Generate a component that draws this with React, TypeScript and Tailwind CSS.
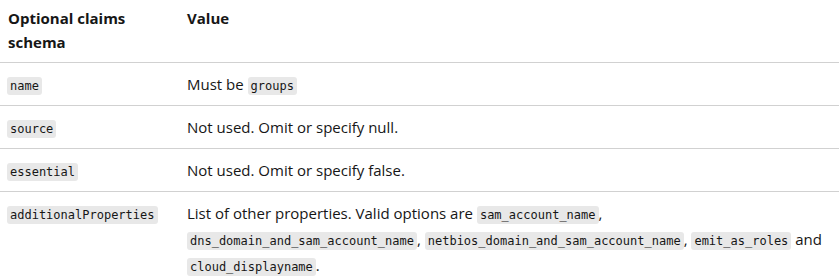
import React from 'react';

const C: React.FC<{ children: React.ReactNode }> = ({ children }) => (
  <code className="rounded-[3px] bg-[#e8e8e8] px-[3px] py-[2px] font-['DejaVu_Sans_Mono',monospace] text-[12px] leading-[14px] text-[#161616]">
    {children}
  </code>
);

const rows: { key: string; value: React.ReactNode }[] = [
  { key: 'name', value: <>Must be <C>groups</C></> },
  { key: 'source', value: 'Not used. Omit or specify null.' },
  { key: 'essential', value: 'Not used. Omit or specify false.' },
  {
    key: 'additionalProperties',
    value: (
      <>
        List of other properties. Valid options are <C>sam_account_name</C>,{' '}
        <C>dns_domain_and_sam_account_name</C>, <C>netbios_domain_and_sam_account_name</C>,{' '}
        <C>emit_as_roles</C> and <C>cloud_displayname</C>.
      </>
    ),
  },
];

export default function App() {
  return (
    <div className="h-[280px] w-[839px] overflow-hidden bg-white font-['Open_Sans',sans-serif] text-[15px] text-[#161616]">
      <table className="w-full border-collapse text-left">
        <thead>
          <tr className="border-b border-[#d1d1d1]">
            <th className="w-[179px] px-2 pt-[6px] pb-[8px] align-top font-bold leading-6">
              Optional claims
              <br />
              schema
            </th>
            <th className="px-2 pt-[6px] pb-[8px] align-top font-bold leading-6">Value</th>
          </tr>
        </thead>
        <tbody>
          {rows.map((r) => (
            <tr key={r.key} className="border-b border-[#d1d1d1]">
              <td className="h-[42px] px-[7px] py-[8px] align-top leading-[26px]">
                <C>{r.key}</C>
              </td>
              <td className="h-[42px] px-2 py-[8px] align-top leading-[26px]">{r.value}</td>
            </tr>
          ))}
        </tbody>
      </table>
    </div>
  );
}
